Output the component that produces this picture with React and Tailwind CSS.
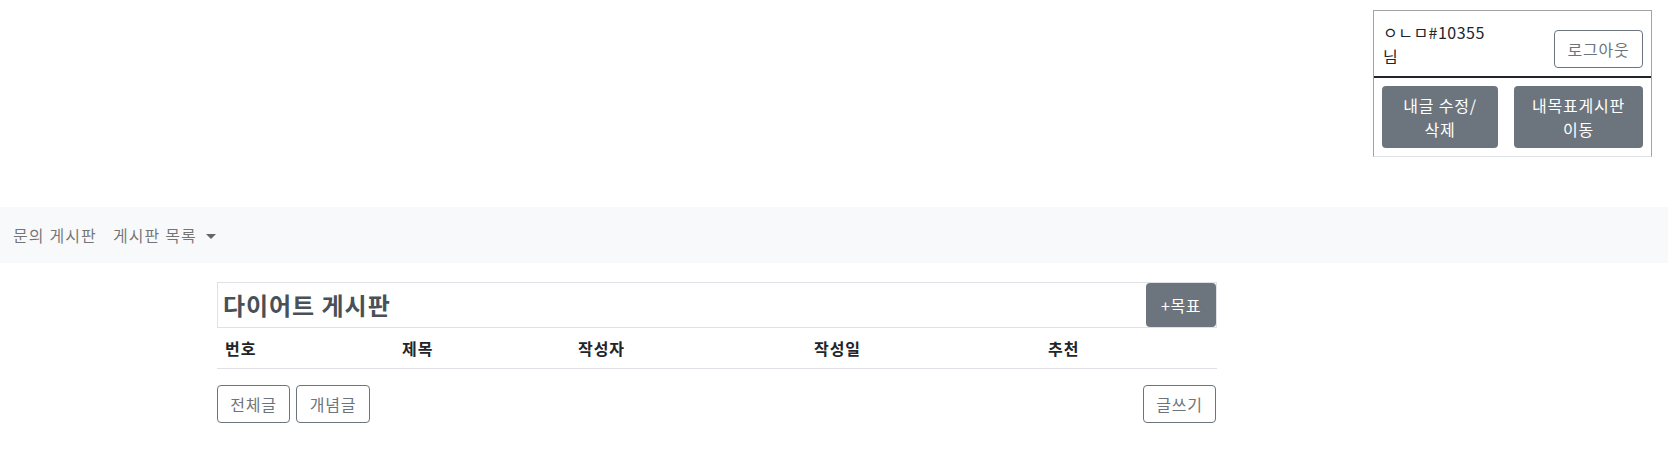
import React from 'react';

const font = { fontFamily: '"Noto Sans CJK KR", "Noto Sans", sans-serif' };

const columns = ['번호', '제목', '작성자', '작성일', '추천'];

function UserBox() {
  return (
    <div className="w-[279px] border border-[#a3a3a3] border-b-[#dee2e6]">
      <div className="flex items-end justify-between border-b-2 border-[#212529] pl-[9px] pr-[8px] pt-[9px] pb-[8px]">
        <div className="text-[16px] leading-[24px] tracking-[0.03em] text-[#212529]">
          <div>ㅇㄴㅁ#10355</div>
          <div>님</div>
        </div>
        <button
          type="button"
          className="h-[38px] w-[89px] rounded border border-[#6c757d] bg-white text-[16px] tracking-[0.05em] text-[#6c757d]"
        >
          로그아웃
        </button>
      </div>
      <div className="flex gap-4 px-2 pt-[8px] pb-[8px]">
        <button
          type="button"
          className="h-[62px] w-[116px] rounded bg-[#6c757d] px-2 text-[16px] leading-[24px] tracking-[0.05em] text-white"
        >
          내글 수정/
          <br />
          삭제
        </button>
        <button
          type="button"
          className="h-[62px] w-[129px] rounded bg-[#6c757d] px-2 text-[16px] leading-[24px] tracking-[0.05em] text-white"
        >
          내목표게시판
          <br />
          이동
        </button>
      </div>
    </div>
  );
}

function NavBar() {
  return (
    <nav className="mt-[50px] flex h-[56px] items-center bg-[#f8f9fa] pl-[13px] text-[16px] tracking-[0.07em] text-black/55">
      <span>문의 게시판</span>
      <span className="ml-[16px] flex items-center">
        게시판 목록
        <span className="ml-[9px] mt-[2px] h-0 w-0 border-x-[5px] border-t-[5px] border-x-transparent border-t-[#666]" />
      </span>
    </nav>
  );
}

export default function App() {
  return (
    <div className="min-h-[455px] bg-white" style={font}>
      <div className="flex justify-end pt-[10px] pr-[16px]">
        <UserBox />
      </div>

      <NavBar />

      <main className="ml-[217px] mt-[19px] w-[1000px]">
        <div className="flex h-[46px] border border-[#dee2e6]">
          <h4 className="flex flex-1 items-center pl-[5px] text-[24px] font-bold tracking-[0.04em] text-[#495057]">
            다이어트 게시판
          </h4>
          <button
            type="button"
            className="w-[70px] rounded bg-[#6c757d] text-[16px] tracking-[0.04em] text-white"
          >
            +목표
          </button>
        </div>

        <div className="grid grid-cols-[177px_176px_236px_234px_1fr] border-b border-[#dee2e6]">
          {columns.map((c) => (
            <div key={c} className="px-2 py-2 text-[16px] font-bold leading-[24px] tracking-[0.06em] text-[#212529]">
              {c}
            </div>
          ))}
        </div>

        <div className="mt-4 flex justify-between">
          <div className="flex gap-[6px]">
            <button
              type="button"
              className="h-[38px] w-[73px] rounded border border-[#6c757d] text-[16px] tracking-[0.05em] text-[#6c757d]"
            >
              전체글
            </button>
            <button
              type="button"
              className="h-[38px] w-[74px] rounded border border-[#6c757d] text-[16px] tracking-[0.05em] text-[#6c757d]"
            >
              개념글
            </button>
          </div>
          <button
            type="button"
            className="mr-[1px] h-[38px] w-[73px] rounded border border-[#6c757d] text-[16px] tracking-[0.05em] text-[#6c757d]"
          >
            글쓰기
          </button>
        </div>
      </main>
    </div>
  );
}
